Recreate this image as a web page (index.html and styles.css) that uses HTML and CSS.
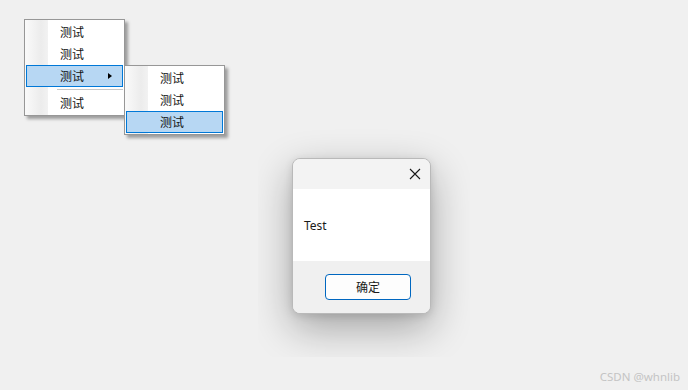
FILE: index.html
```html
<!DOCTYPE html>
<html>
<head>
<meta charset="utf-8">
<link rel="stylesheet" href="styles.css">
</head>
<body>
<div class="desk">
  <div class="menu menu-main">
    <div class="item"><span class="label">测试</span></div>
    <div class="item"><span class="label">测试</span></div>
    <div class="item active"><span class="label">测试</span><span class="arrow"></span></div>
    <div class="sep"></div>
    <div class="item"><span class="label">测试</span></div>
  </div>
  <div class="menu menu-sub">
    <div class="item"><span class="label">测试</span></div>
    <div class="item"><span class="label">测试</span></div>
    <div class="item active"><span class="label">测试</span></div>
  </div>

  <div class="shadow-frame">
    <div class="dialog">
      <div class="titlebar">
        <svg class="close" width="12" height="12" viewBox="0 0 12 12"><path d="M1 1L11 11M11 1L1 11" stroke="#1a1a1a" stroke-width="1.1" fill="none"/></svg>
      </div>
      <div class="content">Test</div>
      <div class="footer"><button class="btn">确定</button></div>
    </div>
  </div>

  <div class="watermark">CSDN @whnlib</div>
</div>
</body>
</html>
```
FILE: styles.css
```css
* { box-sizing: border-box; }
html, body { margin: 0; padding: 0; }
body {
  background: #f0f0f0;
  width: 688px;
  height: 390px;
  overflow: hidden;
  font-family: "Noto Sans", "Noto Sans CJK SC", sans-serif;
}
.desk { position: relative; width: 688px; height: 390px; }

.menu {
  position: absolute;
  width: 101px;
  background: linear-gradient(to right, #fafafa 0px, #ececec 16px, #f2f2f2 23px, #ffffff 23px);
  border: 1px solid #979797;
  padding: 1px;
  box-shadow: 3px 3px 3px rgba(0, 0, 0, 0.35);
  font-family: "Noto Sans CJK SC", sans-serif;
  font-size: 12px;
  color: #111111;
}
.menu-main { left: 24px; top: 19px; }
.menu-sub { left: 124px; top: 65px; }

.item {
  height: 22px;
  display: flex;
  align-items: center;
  padding-left: 33px;
  position: relative;
  border: 1px solid transparent;
}
.item .label { flex: 1; line-height: 1; }
.item.active {
  background: #b7d7f3;
  border-color: #0078d7;
}
.arrow {
  width: 0;
  height: 0;
  border-top: 3.5px solid transparent;
  border-bottom: 3.5px solid transparent;
  border-left: 4px solid #000;
  margin-right: 10px;
}
.sep {
  height: 5px;
  margin-left: 31px;
  display: flex;
  align-items: center;
}
.sep::before {
  content: "";
  display: block;
  width: 100%;
  height: 1px;
  background: #c8c8c8;
}

.shadow-frame {
  position: absolute;
  left: 258px;
  top: 120px;
  width: 212px;
  height: 237px;
  overflow: hidden;
  padding: 38px 0 0 34px;
}
.dialog {
  width: 139px;
  height: 156px;
  border: 1px solid #b9b9b9;
  border-radius: 8px;
  overflow: hidden;
  display: flex;
  flex-direction: column;
  box-shadow: 0 14px 40px rgba(0, 0, 0, 0.32), 0 2px 8px rgba(0, 0, 0, 0.12);
  background: #f0f0f0;
}
.titlebar {
  height: 30px;
  background: #f3f3f3;
  display: flex;
  justify-content: flex-end;
  align-items: center;
  padding-right: 9px;
}
.close { display: block; margin-top: 0; }
.content {
  height: 72px;
  background: #ffffff;
  font-size: 12px;
  color: #1a1a1a;
  padding-left: 11px;
  display: flex;
  align-items: center;
}
.footer {
  flex: 1;
  background: #f0f0f0;
  padding: 13px 0 0 32px;
}
.btn {
  width: 86px;
  height: 26px;
  border: 1px solid #0067c0;
  border-radius: 4px;
  background: #fdfdfd;
  font-family: "Noto Sans CJK SC", sans-serif;
  font-size: 12px;
  color: #1a1a1a;
  padding: 0;
  line-height: 1;
}

.watermark {
  position: absolute;
  right: 8px;
  bottom: 6px;
  font-family: "Noto Sans", sans-serif;
  font-size: 11.5px;
  color: #c4c4c4;
}
```
